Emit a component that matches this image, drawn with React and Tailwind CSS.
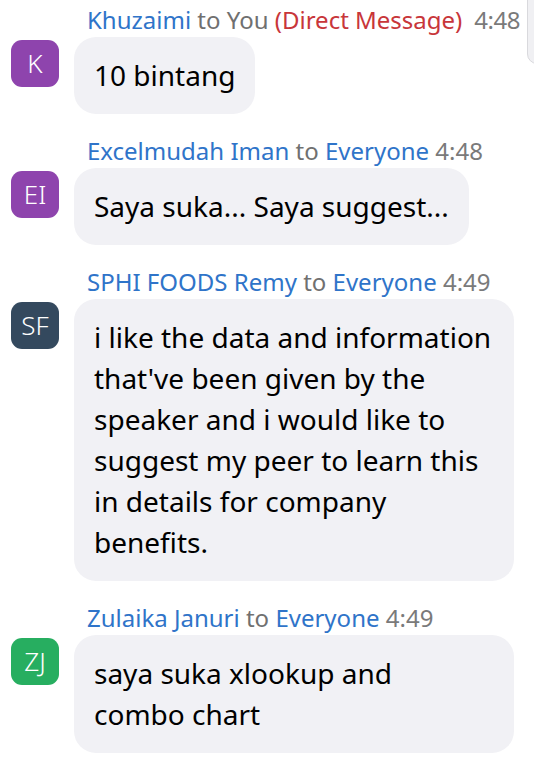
const MESSAGES = [
  {
    initials: 'K',
    avatar: 'bg-[#8e44ad]',
    from: 'Khuzaimi',
    to: 'You',
    direct: true,
    time: '4:48',
    lines: ['10 bintang'],
  },
  {
    initials: 'EI',
    avatar: 'bg-[#8e44ad]',
    from: 'Excelmudah Iman',
    to: 'Everyone',
    time: '4:48',
    lines: ['Saya suka... Saya suggest...'],
  },
  {
    initials: 'SF',
    avatar: 'bg-[#34495e]',
    from: 'SPHI FOODS Remy',
    to: 'Everyone',
    time: '4:49',
    full: true,
    lines: [
      'i like the data and information',
      "that've been given by the",
      'speaker and i would like to',
      'suggest my peer to learn this',
      'in details for company',
      'benefits.',
    ],
  },
  {
    initials: 'ZJ',
    avatar: 'bg-[#27ae60]',
    from: 'Zulaika Januri',
    to: 'Everyone',
    time: '4:49',
    full: true,
    lines: ['saya suka xlookup and', 'combo chart'],
  },
]

function Message({ msg }) {
  return (
    <div className="flex flex-col">
      <div className="pl-[87px] h-[28px] leading-[28px] text-[24px] whitespace-nowrap">
        <span className="text-[#2f74c9]">{msg.from}</span>
        <span className="text-[#707070]"> to </span>
        {msg.direct ? (
          <>
            <span className="text-[#707070]">You</span>
            <span className="text-[#c8363a]"> (Direct Message)</span>
            <span className="text-[#7a7a7a] ml-[12px] tracking-[-0.5px]">{msg.time}</span>
          </>
        ) : (
          <>
            <span className="text-[#2f74c9]">{msg.to}</span>
            <span className="text-[#7a7a7a]"> {msg.time}</span>
          </>
        )}
      </div>
      <div className="flex items-start gap-[15px] pl-[11px] mt-[3px]">
        <div className={`${msg.avatar} mt-[3px] w-[48px] h-[47px] shrink-0 rounded-[11px] flex items-center justify-center text-white text-[26px] font-light`}>
          {msg.initials}
        </div>
        <div className={`${msg.full ? 'w-[440px]' : ''} bg-[#f1f1f5] rounded-[22px] px-5 py-[18px] text-[28px] leading-[41px] text-black whitespace-nowrap`}>
          {msg.lines.map((l, i) => (
            <div key={i}>{l}</div>
          ))}
        </div>
      </div>
    </div>
  )
}

export default function App() {
  return (
    <div className="relative w-[534px] h-[758px] overflow-hidden bg-white font-['Noto_Sans','Open_Sans',sans-serif]">
      <div className="absolute left-[527px] -top-3 w-[30px] h-[76px] rounded-[10px] bg-[#f0f0f3] border border-[#d9d9dd]" />
      <div className="flex flex-col gap-[23px] pt-[6px]">
        {MESSAGES.map((m, i) => (
          <Message key={i} msg={m} />
        ))}
      </div>
    </div>
  )
}
